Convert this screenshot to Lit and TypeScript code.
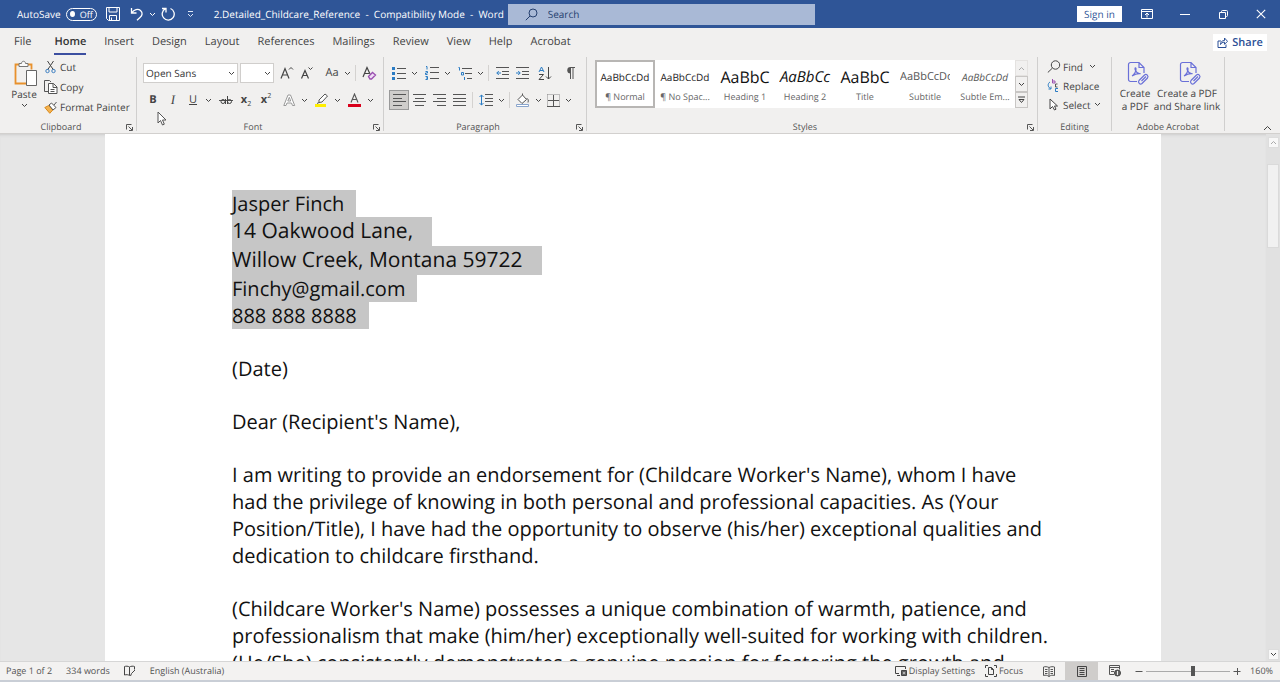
import { LitElement, html, svg, css, TemplateResult, SVGTemplateResult } from "lit";
import { customElement, property } from "lit/decorators.js";
import { classMap } from "lit/directives/class-map.js";

const icon = (w: number, h: number, body: SVGTemplateResult) => html`<svg
  width=${w} height=${h} viewBox="0 0 ${w} ${h}" fill="none" stroke="currentColor" stroke-width="1" aria-hidden="true">${body}</svg>`;

const chevron = icon(7, 5, svg`<path d="M1 1 L3.5 3.5 L6 1"/>`);

const lines = (rows: [number, number, number][], color = "#555") =>
  svg`${rows.map(([x, y, w]) => svg`<path stroke=${color} d="M${x} ${y}.5h${w}"/>`)}`;

const icons = {
  save: icon(14, 14, svg`<path stroke="#fff" d="M.5.5h13v13h-11l-2-2z M3 .5v4.5h8V.5 M3.5 13.5v-5h7v5 M5.5 13v-2.500"/>`),
  undo: icon(14, 14, svg`<path stroke="#fff" stroke-width="1.3" d="M1.500 1v5h5 M1.700 5.800C4 2.500 8 1.300 10.500 3.500c2.600 2.400 1.800 5-.5 7L7 13.300"/>`),
  redo: icon(14, 14, svg`<path stroke="#fff" stroke-width="1.300" d="M4.500 1.700A6 6 0 1 0 9.500 1.500 M1 1.500h4v4"/>`),
  more: icon(7, 8, svg`<path stroke="#dfe7f5" d="M1 1.500h5 M1 4l2.500 2.500L6 4"/>`),
  search: icon(13, 13, svg`<circle cx="8" cy="5" r="4" stroke="#26406f"/><path stroke="#26406f" d="M5 8L.8 12.200"/>`),
  ribbonMode: icon(12, 10, svg`<path stroke="#fff" d="M.5.5h11v9H.5z M.5 2.500h11 M6 8.500v-4 M4 6l2-2 2 2"/>`),
  minimise: icon(10, 10, svg`<path stroke="#fff" d="M0 5.500h10"/>`),
  restore: icon(9, 9, svg`<path stroke="#fff" d="M.5 2.500h6v6h-6z M2.500 2V1.500a1 1 0 0 1 1-1h4a1 1 0 0 1 1 1v4a1 1 0 0 1-1 1H7"/>`),
  close: icon(10, 10, svg`<path stroke="#fff" stroke-width="1.100" d="M.8.8l8.400 8.400M9.200.8L.8 9.200"/>`),
  share: icon(11, 11, svg`<path stroke="#2b4f96" d="M4 4H1v6.500h8V7.500 M3.500 7.500c0-2.500 1.500-4 4-4V1l3 3.300-3 3V5.200c-2 0-3.200.8-4 2.300z"/>`),
  paste: icon(24, 27, svg`<path stroke="#e8912d" stroke-width="1.800" d="M5 4.500H1.500v19H12 M14 4.500h3.500v5"/><path stroke="#777" fill="#fafafa" d="M5 6.500v-3h2.500c0-3 4-3 4 0H14v3z"/><path fill="#fff" stroke="#666" d="M12.500 10.500h10v15h-10z"/>`),
  cut: icon(12, 14, svg`<path stroke="#444" d="M2.500 1l6 9 M8.500 1l-6 9"/><circle cx="2.500" cy="11" r="1.700" stroke="#3d7fc1"/><circle cx="8.500" cy="11" r="1.700" stroke="#3d7fc1"/>`),
  copy: icon(14, 14, svg`<path stroke="#555" d="M4 11.500H.5V.5h5l1.500 1.500"/><path stroke="#555" fill="#fff" d="M4.500 3.500h5l3.500 3.500v6.500H4.500z M9 3.500v4h4 M6.500 9.500h4 M6.500 11.500h4"/>`),
  brush: icon(14, 13, svg`<path fill="#f3b24f" stroke="#d98a1f" d="M.8 6.500l4-2 4 4.500-3 3.300z"/><path stroke="#555" fill="#fff" d="M5 4l2.500-2 4.500 4.500-3 2.500z M10 4l2.500-3"/>`),
  launcher: icon(7, 7, svg`<path stroke="#555" d="M.5 5.500V.5h5 M2.500 2.500l3.500 3.500 M6.500 3v3.500H3"/>`),
  grow: icon(14, 14, svg`<path stroke="#444" stroke-width="1.200" d="M1 12.500L5 2.500l4 10 M2.500 9h5"/><path stroke="#444" d="M9 3.500l2-2 2 2"/>`),
  shrink: icon(14, 14, svg`<path stroke="#444" stroke-width="1.200" d="M1.500 12.500L5 4.500l3.500 8 M3 9.500h4"/><path stroke="#444" d="M8.500 1.500l2 2 2-2"/>`),
  clear: icon(15, 14, svg`<path stroke="#444" stroke-width="1.200" d="M1 11L5 1.500 8 8 M2.500 7.500h4.500"/><path stroke="#9a4fb0" stroke-width="1.300" fill="#f0dcf5" d="M6.500 10.500l4-4 3 2.500-4 4H8z"/>`),
  strike: icon(14, 10, svg`<path stroke="#555" d="M0 5.500h14"/><circle cx="4" cy="6.500" r="2"/><path d="M6.500 4v5 M8.500 1v8"/><circle cx="10.500" cy="6.500" r="2"/>`),
  effects: icon(13, 13, svg`<path stroke="#999" fill="#fff" d="M.8 11.500L5 1h2.500l4.200 10.500H9.500L8.500 9H4l-1 2.500z M4.800 7L6.300 3.300 7.700 7z"/>`),
  marker: icon(14, 14, svg`<path fill="#ffee00" stroke="none" d="M0 11h11v3H0z"/><path stroke="#555" fill="#fff" d="M4 9.500V7l6-6 2.500 2-5.500 6z M2 10.500l2-1"/>`),
  fontColor: icon(14, 14, svg`<path fill="#d9001b" stroke="none" d="M0 11h13v3H0z"/><path stroke="#555" stroke-width="1.100" d="M3 9.500L6.500 1 10 9.500 M4.300 6.500h4.500"/>`),
  bullets: icon(15, 13, svg`<path fill="#2b7cc4" stroke="none" d="M0 0h3v3H0z M0 5h3v3H0z M0 10h3v3H0z"/>${lines([[5, 1, 9], [5, 6, 9], [5, 11, 9]])}`),
  numbers: icon(15, 14, svg`<path stroke="#2b7cc4" d="M1 .5h1v3 M.5 5.500h2v1.500h-2v1.500h2 M.5 10.500h2v3h-2 M1 12h1.500"/>${lines([[5, 1, 9], [5, 6, 9], [5, 12, 9]])}`),
  multilevel: icon(15, 13, svg`<path stroke="#2b7cc4" d="M.5.5h1v3 M3.500 5.500h2v2.500h-2z M6.500 10v3"/>${lines([[4, 1, 10], [7, 6, 7], [9, 11, 5]])}`),
  outdent: icon(13, 12, svg`${lines([[0, 0, 13], [6, 4, 7], [6, 7, 7], [0, 11, 13]])}<path stroke="#2b7cc4" d="M5 6H.8 M2.800 4l-2 2 2 2"/>`),
  indent: icon(13, 12, svg`${lines([[0, 0, 13], [6, 4, 7], [6, 7, 7], [0, 11, 13]])}<path stroke="#2b7cc4" d="M0 6h4.200 M2.200 4l2 2-2 2"/>`),
  sort: icon(14, 15, svg`<path stroke="#2b7cc4" d="M1 6l2.500-5L6 6 M2 4.500h3"/><path stroke="#444" d="M1 8.500h4.500l-4.500 5h5 M10.500 1v12 M8 10.500l2.500 2.500 2.500-2.500"/>`),
  pilcrow: icon(9, 12, svg`<path fill="#555" stroke="none" d="M4.500 0a3.200 3.200 0 0 0 0 6.400z"/><path stroke="#555" d="M4 .5h5 M4.500 0v12 M7 0v12"/>`),
  left: icon(13, 12, lines([[0, 0, 13], [0, 4, 9], [0, 7, 13], [0, 11, 9]])),
  center: icon(13, 12, lines([[0, 0, 13], [2, 4, 9], [0, 7, 13], [2, 11, 9]])),
  right: icon(13, 12, lines([[0, 0, 13], [4, 4, 9], [0, 7, 13], [4, 11, 9]])),
  justify: icon(13, 12, lines([[0, 0, 13], [0, 4, 13], [0, 7, 13], [0, 11, 13]])),
  spacing: icon(14, 12, svg`${lines([[6, 0, 8], [6, 4, 8], [6, 7, 8], [6, 11, 8]])}<path stroke="#2b7cc4" d="M2.500.8v10.400 M.5 3l2-2 2 2 M.5 9l2 2 2-2"/>`),
  shading: icon(14, 14, svg`<path stroke="#555" fill="#fff" d="M2 6.500L6.500 2l4 4.500-4.500 4z M6.500 2V.5 M10.500 5.500c2 0 2 2 1.500 4"/><path stroke="#8aa5cc" fill="#fff" d="M.5 11.500h12v2H.5z"/>`),
  borders: icon(13, 13, svg`<path stroke="#888" stroke-dasharray="1 1" d="M.5.5h12v12 M.5.5v12"/><path stroke="#555" d="M6.500 1v11 M1 6.500h11 M0 12.500h13"/>`),
  up: icon(7, 5, svg`<path stroke="#aaa" d="M1 4l2.500-2.500L6 4"/>`),
  gallery: icon(7, 8, svg`<path stroke="#444" d="M0 1h7 M1 3.500h5L3.500 6.500z"/>`),
  find: icon(14, 13, svg`<circle cx="8.500" cy="5" r="4.200" stroke="#444"/><path stroke="#444" d="M5.500 8L.8 12.500"/>`),
  replace: icon(13, 13, svg`<path stroke="#9a4fb0" d="M5.500 0v4h2.500V2H6"/><path stroke="#2b7cc4" d="M3 3C.5 4.500.5 8 3.500 9.500 M1.500 10h2.500V7.500"/><path stroke="#555" d="M10.500 5h-2v3h2"/><path stroke="#2b7cc4" d="M11 9.500H8.500v3H11"/>`),
  select: icon(9, 13, svg`<path stroke="#444" fill="#fff" d="M1 1v10l2.500-2.500L5.500 12l1.500-.8L5.500 8H8.500z"/>`),
  pdf: icon(23, 25, svg`<g stroke="#6a70d8" stroke-width="1.200"><path d="M10 20.500H3.500a2 2 0 0 1-2-2v-15a2 2 0 0 1 2-2H12l5 5V12 M12 1.500v5h5"/><path d="M5 15c2-1 4.500-5 4-7.500-.8-1.500-1.500 0-.5 2 1 2 2.500 3.500 5 3.200-3-.5-6 .8-8.500 2.300z"/><path d="M15 16.500l-3 3c-1.500 2 1 4.500 3 3l3-3 M14.500 20l4.500-4.500 M18 19.500l2.500-2.500c1.500-2-1-4.500-3-3l-2.500 2.500"/></g>`),
  collapse: icon(9, 6, svg`<path stroke="#444" d="M1 5l3.500-3.500L8 5"/>`),
  proof: icon(12, 12, svg`<path stroke="#444" d="M5.500 10.500V2C4 1 2 1 .5 1.500v8.500c2-.5 3.500-.5 5 .5z M5.500 2c1.500-1 3.500-1 5-.5v3 M6.500 11l1-2.500L11 5"/>`),
  display: icon(12, 12, svg`<path stroke="#444" d="M4 8.500H.5v-7h10V4 M2 10.500h3"/><path fill="#666" stroke="#444" d="M6.500 5.500h5v5h-5z"/><path stroke="#fff" d="M8 8h2"/>`),
  focus: icon(12, 12, svg`<path stroke="#444" d="M.5 3V.5H3 M9 .5h2.500V3 M.5 9v2.500H3 M9 11.500h2.500V9 M3.500 2.500h3l2 2v5h-5z M6.500 2.500v2h2"/>`),
  read: icon(12, 11, svg`<path stroke="#555" d="M6 10.500V1.500c-2-1-4-1-5.500-.5v8.500c2-.5 3.500-.5 5.500 1 2-1.500 3.500-1.500 5.500-1V1C10 .5 8 .5 6 1.500 M2 3.500h2.500 M2 5.500h2.500 M2 7.500h2.500 M7.500 3.500H10 M7.500 5.500H10 M7.500 7.500H10"/>`),
  print: icon(10, 11, svg`<path stroke="#444" d="M.5.5h9v10h-9z M2.500 2.500h5 M2.500 4.500h5 M2.500 6.500h5 M2.500 8.500h5"/>`),
  web: icon(12, 12, svg`<path stroke="#555" d="M5 9.500H.5v-9h10v4 M.5 2.500h10 M2 4.500h3 M2 6.500h3"/><circle cx="8.500" cy="8" r="3" fill="#666" stroke="#444"/><path stroke="#eee" d="M8.500 6v4"/>`),
  minus: icon(8, 8, svg`<path d="M.5 4.500h7"/>`),
  plus: icon(8, 8, svg`<path d="M.5 4.500h7 M4.500 1v7"/>`),
  pointer: icon(10, 15, svg`<path stroke="#555" fill="#fff" d="M1 1v11l2.500-2.500L5.500 14l1.800-.8L5.500 9H9z"/>`),
};

const shared = css`
  *, *::before { box-sizing: border-box; }
  svg { display: block; flex: none; }
  button { display: flex; align-items: center; justify-content: center; padding: 0; border: 0;
    background: none; color: inherit; font: inherit; white-space: nowrap; text-rendering: inherit; }
`;

@customElement("ribbon-group")
class RibbonGroup extends LitElement {
  @property() label = "";
  @property({ type: Boolean }) launcher = false;
  static styles = [shared, css`
    :host { display: flex; flex-direction: column; flex: none; border-right: 1px solid #d0cfce; height: 74px; box-sizing: border-box; }
    .body { height: 60px; display: flex; }
    .foot { display: flex; align-items: center; height: 20px; margin-bottom: -6px; text-align: center; font-size: 9px; color: #555; }
    .foot span { flex: 1; }
    .foot button { width: 14px; height: 14px; }
  `];
  render() {
    return html`<div class="body"><slot></slot></div>
      <div class="foot"><span>${this.label}</span>
        ${this.launcher ? html`<button aria-label="${this.label} settings">${icons.launcher}</button>` : ""}</div>`;
  }
}

@customElement("app-root")
class AppRoot extends LitElement {
  static styles = [shared, css`
    :host { display: flex; flex-direction: column; height: 100vh; overflow: hidden; position: relative;
      font-family: "Open Sans", "Noto Sans", sans-serif; font-size: 10px; line-height: 14px; color: #444; background: #f1f0ef;
      text-rendering: geometricPrecision; }
    .title { display: flex; align-items: center; height: 28px; background: #2f5597; color: #fff; padding-left: 17px; flex: none; }
    .autosave { display: flex; align-items: center; gap: 5px; }
    .toggle { display: flex; align-items: center; gap: 5px; width: 31px; height: 13px; border: 1px solid #fff; border-radius: 7px; padding: 0 3px; font-size: 9px; line-height: 11px; justify-content: flex-start; }
    .toggle i { width: 6px; height: 6px; border-radius: 50%; background: #fff; }
    .quick { display: flex; align-items: center; gap: 5px; margin-left: 9px; }
    .quick .later { margin-left: 7px; }
    .quick .s { margin-left: 5px; }
    .name { margin-left: 20px; width: 294px; white-space: nowrap; }
    .search { display: flex; align-items: center; gap: 10px; width: 307px; height: 21px; padding-left: 17px; background: #a9b9d6; }
    .search input { flex: 1; min-width: 0; border: 0; padding: 0; background: none; font: inherit; outline: none; text-rendering: inherit; }
    .search input::placeholder { color: #26406f; opacity: 1; }
    .window { display: flex; align-items: center; margin-left: auto; }
    .window button { width: 38px; height: 28px; }
    .window .signin { width: 45px; height: 16px; background: #fff; color: #2f5597; margin-right: 6px; }
    .tabs { display: flex; align-items: center; gap: 18px; height: 29px; padding: 0 13px 0 14px; font-size: 11px; flex: none; }
    .tabs a { color: inherit; text-decoration: none; height: 24px; line-height: 22px; border-bottom: 2px solid transparent; }
    .tabs a:first-child { margin-right: 5px; }
    .tabs a.on { font-weight: 600; color: #333; border-color: #3c4fa0; }
    .share { margin-left: auto; gap: 4px; width: 54px; height: 17px; background: #fff; color: #2b4f96; font-weight: 600; }
    .ribbon { display: flex; height: 77px; flex: none; border-bottom: 1px solid #d2d0ce; }
    .collapse { margin: auto 7px 1px auto; width: 11px; height: 8px; }
    .clip { width: 137px; }
    .font { width: 247px; }
    .para { width: 203px; }
    .styles { width: 451px; }
    .edit { width: 74px; }
    .acro { width: 113px; }
    .paste { flex-direction: column; justify-content: flex-start; width: 28px; margin: 3px 6px 0 10px; }
    .paste svg:first-child { margin-left: 3px; }
    .paste span { margin-bottom: 2px; }
    .stack { display: grid; grid-template-rows: repeat(3, 20px); }
    .stack button { justify-content: flex-start; gap: 3px; }
    .stack .ic { width: 13px; display: flex; justify-content: center; }
    .stack.tight { grid-template-rows: repeat(3, 19px); padding-left: 9px; height: 57px; }
    .stack .wide { gap: 5px; }
    .rows { display: flex; flex-direction: column; gap: 7px; padding: 6px 0 0 6px; }
    .para .rows { padding-left: 5px; }
    .row { display: flex; align-items: center; height: 20px; }
    .tool { width: 20px; height: 20px; font-size: 11px; }
    .drop { width: 10px; height: 20px; }
    .g { margin-left: 3px; }
    .s { margin-left: 5px; }
    .on.tool { background: #cfcdcb; border: 1px solid #999; }
    .rule { width: 1px; height: 16px; background: #d4d2d0; margin: 0 3px; }
    .combo { display: grid; align-items: center; height: 20px; background: #fff; border: 1px solid #d0cecc; }
    .combo > * { grid-area: 1 / 1; }
    .combo svg { justify-self: end; margin-right: 2px; pointer-events: none; z-index: 1; }
    .combo select { appearance: none; width: 100%; height: 18px; border: 0; background: none; padding: 0 0 0 2px; font: inherit; color: #333; text-rendering: inherit; }
    .family { width: 95px; margin-right: 2px; }
    .size { width: 34px; }
    .b { font-weight: 700; } .i { font-style: italic; font-family: "Liberation Serif", serif; font-size: 13px; } .u { text-decoration: underline; }
    sub, sup { font-size: 7px; line-height: 0; }
    .gallery { display: flex; margin: 3px 0 0 8px; height: 48px; background: #fff; }
    .style { flex-direction: column; width: 60px; height: 48px; padding-top: 3px; font-size: 9px; color: #666; gap: 3px; border: 2px solid transparent; }
    .style.on { border-color: #b8b6b4; }
    .sample { width: 52px; height: 20px; line-height: 20px; overflow: hidden; color: #222; font-size: 10px; }
    .big { font-size: 16px; color: #111; }
    .it { font-style: italic; }
    .big.it { font-size: 15px; }
    .grey { color: #555; }
    .cut { font-size: 11px; width: 50px; }
    .scroll { display: grid; grid-template-rows: repeat(3, 16px); width: 13px; background: #f1f0ef; }
    .scroll button { border: 1px solid #c8c6c4; }
    .scroll button:first-child { border-color: #e4e2e0; }
    .tall { flex-direction: column; justify-content: flex-start; margin-top: 4px; line-height: 13px; gap: 1px; }
    .tall svg { margin-left: 6px; }
    .create { width: 30px; margin-left: 8px; }
    .link { width: 62px; margin-left: 6px; }
    .work { flex: 1; min-height: 0; display: flex; background: #e6e6e6; }
    .canvas { flex: 1; display: flex; justify-content: center; overflow: hidden; box-shadow: inset 0 3px 3px -2px #ccc; }
    .page { width: 1056px; height: max-content; padding: 56px 108px 96px 127px; background: #fff; color: #111; font-size: 20px; line-height: 27px; }
    .page p { margin: 26px 0 0; }
    .address { font-style: normal; display: flex; flex-direction: column; align-items: flex-start; }
    .address span { background: #c6c6c6; padding-right: 12px; white-space: nowrap; }
    .address .lg { font-size: 21px; line-height: 29px; padding-right: 19px; }
    .bar { width: 14px; display: flex; flex-direction: column; align-items: center; justify-content: space-between; background: #e1e1e1; padding: 3px 0 1px; }
    .bar button { width: 11px; height: 11px; background: #f8f8f8; border: 1px solid #ddd; flex: none; }
    .thumb { width: 12px; height: 84px; background: #f1f1f1; border: 1px solid #dadada; margin: 16px 0 auto; }
    .status { display: flex; align-items: center; height: 21px; flex: none; padding: 0 7px 0 6px; border-top: 1px solid #d6d6d6; border-bottom: 2px solid #c9ced6; font-size: 9px; color: #555; background: #f3f2f1; }
    .status button { gap: 2px; height: 18px; }
    .facts { display: flex; align-items: center; gap: 14px; }
    .modes { display: flex; margin-left: auto; gap: 10px; }
    .views { display: flex; margin: 0 4px 0 9px; }
    .views button { width: 33px; }
    .views .on { background: #cfcdcb; }
    .zoom { display: flex; align-items: center; gap: 3px; }
    .zoom input { appearance: none; width: 84px; height: 12px; margin: 0; background: linear-gradient(#aaa, #aaa) center / 100% 1px no-repeat; }
    .zoom input::-webkit-slider-thumb { appearance: none; width: 4px; height: 10px; background: #555; }
    .zoom output { margin-left: 6px; }
    .pointer { position: absolute; left: 157px; top: 111px; }
  `];

  private tool(name: string, face: unknown, cls = "") {
    return html`<button class="tool ${cls}" aria-label=${name}>${face}</button>`;
  }
  private drop(name: string) {
    return html`<button class="drop" aria-label="${name} options">${chevron}</button>`;
  }
  private style(name: string, sample: string, cls: string, on = false): TemplateResult {
    return html`<button class=${classMap({ style: true, on })}><span class="sample ${cls}">${sample}</span><span>${name}</span></button>`;
  }

  render() {
    const tabs = ["File", "Home", "Insert", "Design", "Layout", "References", "Mailings", "Review", "View", "Help", "Acrobat"];
    return html`
      <header class="title">
        <div class="autosave"><span>AutoSave</span><button class="toggle" role="switch" aria-checked="false" aria-label="AutoSave"><i></i>Off</button></div>
        <div class="quick">
          <button aria-label="Save">${icons.save}</button>
          <button class="s" aria-label="Undo">${icons.undo}</button>
          <button aria-label="Undo list">${chevron}</button>
          <button aria-label="Redo">${icons.redo}</button>
          <button class="later" aria-label="Customise toolbar">${icons.more}</button>
        </div>
        <div class="name">2.Detailed_Childcare_Reference &nbsp;-&nbsp; Compatibility Mode &nbsp;-&nbsp; Word</div>
        <label class="search">${icons.search}<input type="search" placeholder="Search" aria-label="Search"></label>
        <div class="window">
          <button class="signin">Sign in</button>
          <button aria-label="Ribbon display">${icons.ribbonMode}</button>
          <button aria-label="Minimise">${icons.minimise}</button>
          <button aria-label="Restore">${icons.restore}</button>
          <button aria-label="Close">${icons.close}</button>
        </div>
      </header>
      <nav class="tabs">
        ${tabs.map(t => html`<a href="#${t}" class=${classMap({ on: t === "Home" })}>${t}</a>`)}
        <button class="share">${icons.share}Share</button>
      </nav>
      <section class="ribbon">
        <ribbon-group class="clip" label="Clipboard" launcher>
          <button class="paste">${icons.paste}<span>Paste</span>${chevron}</button>
          <div class="stack">
            <button><span class="ic">${icons.cut}</span>Cut</button>
            <button><span class="ic">${icons.copy}</span>Copy</button>
            <button><span class="ic">${icons.brush}</span>Format Painter</button>
          </div>
        </ribbon-group>
        <ribbon-group class="font" label="Font" launcher>
          <div class="rows">
            <div class="row">
              <div class="combo family"><select aria-label="Font"><option>Open Sans</option></select>${chevron}</div>
              <div class="combo size"><select aria-label="Font size"><option></option></select>${chevron}</div>
              ${this.tool("Grow font", icons.grow, "g")}${this.tool("Shrink font", icons.shrink)}
              ${this.tool("Change case", "Aa", "s")}${this.drop("Case")}
              <span class="rule"></span>${this.tool("Clear formatting", icons.clear)}
            </div>
            <div class="row">
              ${this.tool("Bold", "B", "b")}${this.tool("Italic", "I", "i")}${this.tool("Underline", "U", "u")}${this.drop("Underline")}
              ${this.tool("Strikethrough", icons.strike, "g")}
              ${this.tool("Subscript", html`<span><b>x</b><sub>2</sub></span>`)}${this.tool("Superscript", html`<span><b>x</b><sup>2</sup></span>`)}
              ${this.tool("Text effects", icons.effects, "g")}${this.drop("Effects")}
              ${this.tool("Highlight", icons.marker, "g")}${this.drop("Highlight")}
              ${this.tool("Font colour", icons.fontColor, "g")}${this.drop("Colour")}
            </div>
          </div>
        </ribbon-group>
        <ribbon-group class="para" label="Paragraph" launcher>
          <div class="rows">
            <div class="row">
              ${this.tool("Bullets", icons.bullets)}${this.drop("Bullets")}
              ${this.tool("Numbering", icons.numbers, "g")}${this.drop("Numbering")}
              ${this.tool("Multilevel list", icons.multilevel, "g")}${this.drop("Multilevel")}
              <span class="rule"></span>
              ${this.tool("Decrease indent", icons.outdent)}${this.tool("Increase indent", icons.indent)}
              ${this.tool("Sort", icons.sort, "g")}${this.tool("Show marks", icons.pilcrow, "s")}
            </div>
            <div class="row">
              ${this.tool("Align left", icons.left, "on")}${this.tool("Centre", icons.center)}${this.tool("Align right", icons.right)}${this.tool("Justify", icons.justify)}
              <span class="rule"></span>${this.tool("Line spacing", icons.spacing)}${this.drop("Spacing")}
              <span class="rule"></span>${this.tool("Shading", icons.shading)}${this.drop("Shading")}
              ${this.tool("Borders", icons.borders)}${this.drop("Borders")}
            </div>
          </div>
        </ribbon-group>
        <ribbon-group class="styles" label="Styles" launcher>
          <div class="gallery">
            ${this.style("¶ Normal", "AaBbCcDd", "", true)}
            ${this.style("¶ No Spac...", "AaBbCcDd", "")}
            ${this.style("Heading 1", "AaBbC", "big")}
            ${this.style("Heading 2", "AaBbCc", "big it")}
            ${this.style("Title", "AaBbC", "big")}
            ${this.style("Subtitle", "AaBbCcDd", "grey cut")}
            ${this.style("Subtle Em...", "AaBbCcDd", "grey it")}
            <div class="scroll">
              <button aria-label="Previous styles">${icons.up}</button>
              <button aria-label="Next styles">${chevron}</button>
              <button aria-label="All styles">${icons.gallery}</button>
            </div>
          </div>
        </ribbon-group>
        <ribbon-group class="edit" label="Editing">
          <div class="stack tight">
            <button><span class="ic">${icons.find}</span><span>Find</span><span></span>${chevron}</button>
            <button><span class="ic">${icons.replace}</span>Replace</button>
            <button><span class="ic">${icons.select}</span>Select${chevron}</button>
          </div>
        </ribbon-group>
        <ribbon-group class="acro" label="Adobe Acrobat">
          <button class="tall create">${icons.pdf}<span>Create<br>a PDF</span></button>
          <button class="tall link">${icons.pdf}<span>Create a PDF<br>and Share link</span></button>
        </ribbon-group>
        <button class="collapse" aria-label="Collapse ribbon">${icons.collapse}</button>
      </section>
      <main class="work">
        <div class="canvas">
          <article class="page">
            <address class="address">
              <span>Jasper Finch</span>
              <span class="lg">14 Oakwood Lane,</span>
              <span class="lg">Willow Creek, Montana 59722</span>
              <span>Finchy@gmail.com</span>
              <span>888 888 8888</span>
            </address>
            <p>(Date)</p>
            <p>Dear (Recipient's Name),</p>
            <p>I am writing to provide an endorsement for (Childcare Worker's Name), whom I have had the privilege of knowing in both personal and professional capacities. As (Your Position/Title), I have had the opportunity to observe (his/her) exceptional qualities and dedication to childcare firsthand.</p>
            <p>(Childcare Worker's Name) possesses a unique combination of warmth, patience, and professionalism that make (him/her) exceptionally well-suited for working with children. (He/She) consistently demonstrates a genuine passion for fostering the growth and</p>
          </article>
        </div>
        <div class="bar">
          <button aria-label="Scroll up">${icons.up}</button><div class="thumb"></div><button aria-label="Scroll down">${chevron}</button>
        </div>
      </main>
      <footer class="status">
        <div class="facts">
          <span>Page 1 of 2</span><span>334 words</span>
          <button aria-label="Proofing">${icons.proof}</button><span>English (Australia)</span>
        </div>
        <div class="modes"><button>${icons.display}Display Settings</button><button>${icons.focus}Focus</button></div>
        <div class="views">
          <button aria-label="Read mode">${icons.read}</button>
          <button class="on" aria-label="Print layout">${icons.print}</button>
          <button aria-label="Web layout">${icons.web}</button>
        </div>
        <div class="zoom">
          <button aria-label="Zoom out">${icons.minus}</button>
          <input type="range" min="0" max="100" value="56" aria-label="Zoom">
          <button aria-label="Zoom in">${icons.plus}</button>
          <output>160%</output>
        </div>
      </footer>
      <span class="pointer">${icons.pointer}</span>
    `;
  }
}
